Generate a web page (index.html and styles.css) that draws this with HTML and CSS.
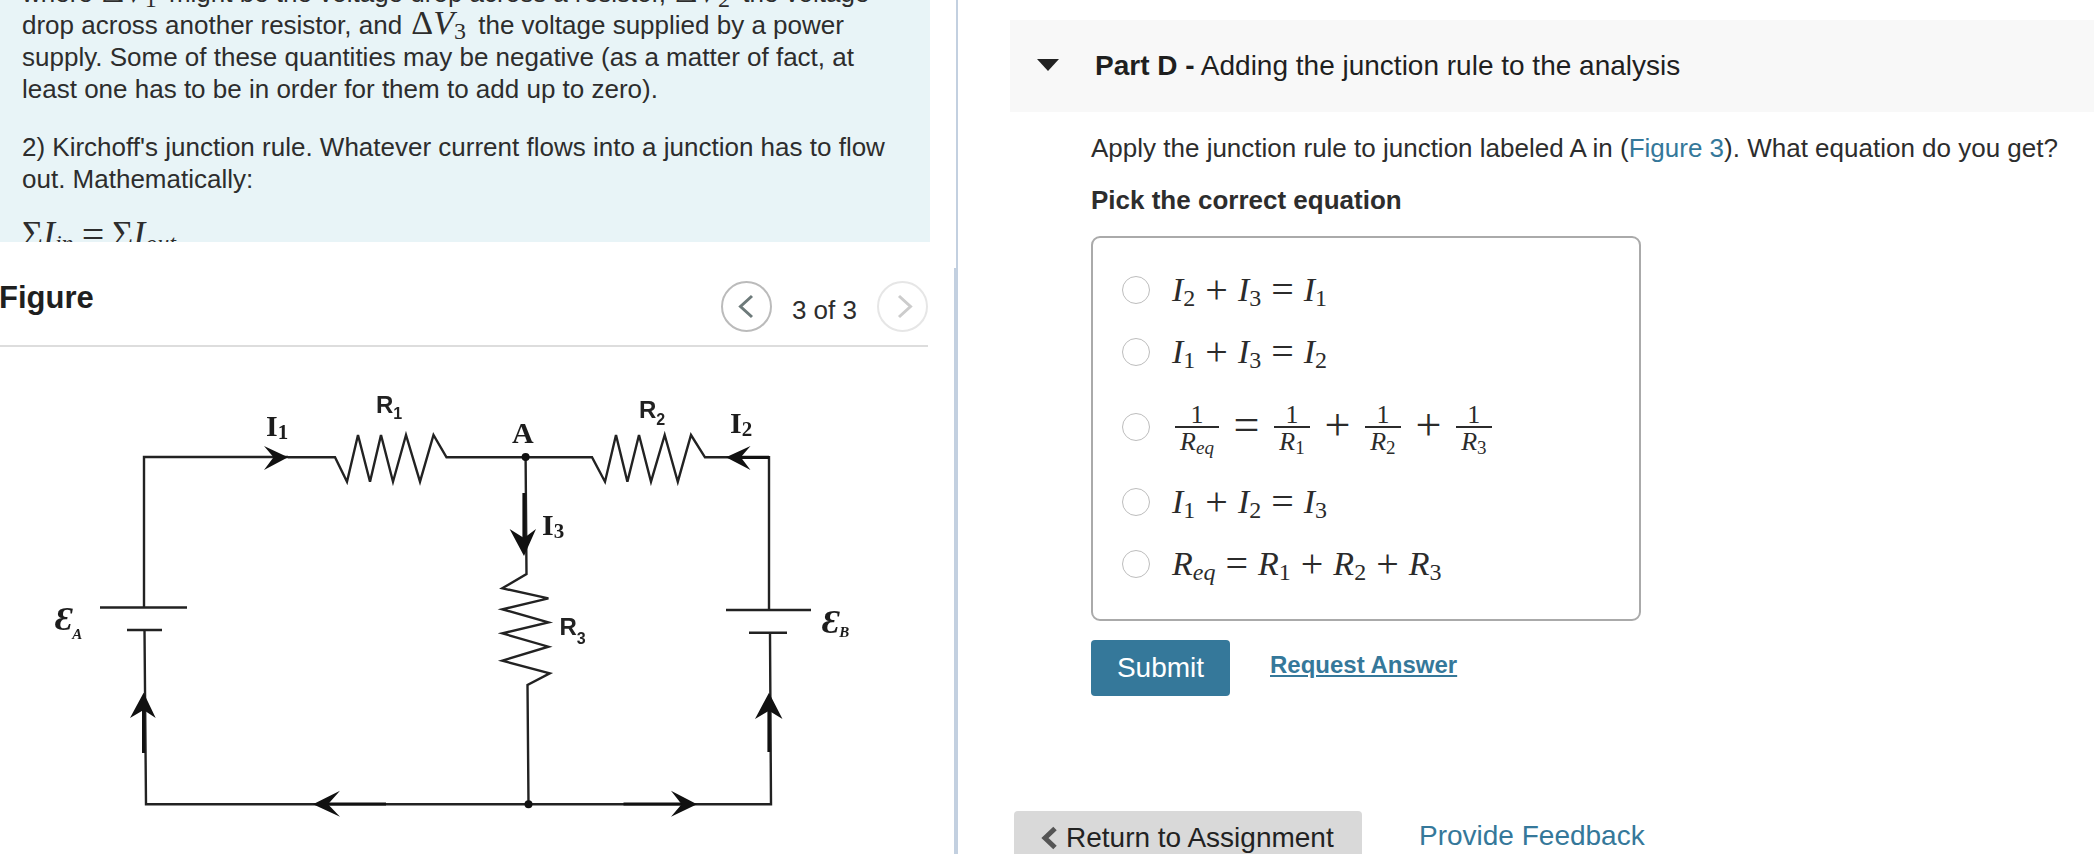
FILE: index.html
```html
<!DOCTYPE html>
<html lang="en">
<head>
<meta charset="utf-8">
<title>Part D - Adding the junction rule to the analysis</title>
<link rel="stylesheet" href="styles.css">
</head>
<body>
<div class="page">
  <section class="left">
    <div class="intro">
      <div class="intro-inner">
        <p class="para">where <span class="m"><span class="up">Δ</span><i>V</i><sub>1</sub></span> might be the voltage drop across a resistor, <span class="m"><span class="up">Δ</span><i>V</i><sub>2</sub></span> the voltage<br>drop across another resistor, and <span class="m"><span class="up">Δ</span><i>V</i><sub>3</sub></span> the voltage supplied by a power<br>supply. Some of these quantities may be negative (as a matter of fact, at<br>least one has to be in order for them to add up to zero).</p>
        <p class="para">2) Kirchoff's junction rule. Whatever current flows into a junction has to flow<br>out. Mathematically:</p>
        <p class="para"><span class="m m-sum">Σ<i>I</i><sub><i>in</i></sub><span class="op op-sum">=</span>Σ<i>I</i><sub><i>out</i></sub></span></p>
      </div>
    </div>
    <header class="fig-head">
      <h2 class="fig-title">Figure</h2>
      <nav class="pager">
        <span class="circle"><svg class="chev" viewBox="0 0 47 47"><path d="M29 13 L17.500 23.500 L29 34"/></svg></span>
        <span class="count">3 of 3</span>
        <span class="circle off"><svg class="chev" viewBox="0 0 47 47"><path d="M20 13 L31.500 23.500 L20 34"/></svg></span>
      </nav>
    </header>
    <svg class="circuit" viewBox="0 348 930 506" role="img" aria-label="Circuit diagram">
      <g class="wire">
        <path d="M288 457 H144 V607.500"/>
        <path d="M100 607.500 H187"/>
        <path d="M127 630 H162"/>
        <path d="M144.500 630 L146 804.300 H771 L770 632.700"/>
        <path d="M749 632.700 H787"/>
        <path d="M726 610 H811"/>
        <path d="M769 610 V457.300 H705 L691 435 L677.800 481.700 L664.700 435 L651 481.700 L639 435 L627.400 481.700 L616 435 L605 481.700 L592 457.300 H446.500 L433.500 435 L420 481.700 L406 435 L393 481.700 L381 435 L370 481.700 L358 435 L347 481.700 L335 457.300 H288"/>
        <path d="M525.600 457 L526.500 574 L502.300 588.300 L548.400 598.300 L502.300 609.300 L548.400 622.300 L502.300 633.300 L548.400 646.700 L502.300 660.700 L549.800 673.300 L527.500 685 L528.500 804"/>
      </g>
      <g class="thick">
        <path d="M524 493 V540"/>
        <path d="M143.600 705 V753"/>
        <path d="M769 705 V752"/>
        <path d="M320 804 H386"/>
        <path d="M623.500 804 H690"/>
        <path d="M735 457.300 H769"/>
      </g>
      <g class="dark">
        <circle cx="525.600" cy="457" r="4"/>
        <circle cx="528.500" cy="804.300" r="4"/>
        <path d="M288 457.300 L264 446 L273.500 457.300 L264 470 Z"/>
        <path d="M726 457.300 L750.500 446 L740.800 457.300 L750.500 470 Z"/>
        <path d="M524 556 L509.600 529 L524 538 L536 529 Z"/>
        <path d="M143.600 692.700 L130 718 L143.600 710 L155.700 718 Z"/>
        <path d="M769 692.700 L755 719 L769 710.700 L782.500 719 Z"/>
        <path d="M313 804.300 L340 790.700 L328 804.300 L340 816.700 Z"/>
        <path d="M697 804.300 L671 790.700 L681.600 804.300 L671 816.700 Z"/>
      </g>
      <g class="lab-serif">
        <text x="266" y="436">I<tspan class="lab-sub" dy="3">1</tspan></text>
        <text x="730" y="433">I<tspan class="lab-sub" dy="3">2</tspan></text>
        <text x="542" y="535">I<tspan class="lab-sub" dy="3">3</tspan></text>
        <text x="512" y="443">A</text>
      </g>
      <g class="lab-sans">
        <text x="376" y="413">R<tspan class="lab-sub2" dy="6">1</tspan></text>
        <text x="639" y="418">R<tspan class="lab-sub2" dy="7">2</tspan></text>
        <text x="559.500" y="635">R<tspan class="lab-sub2" dy="9">3</tspan></text>
      </g>
      <g class="lab-emf">
        <text x="55" y="630">Ɛ<tspan class="lab-sub3" dy="9">A</tspan></text>
        <text x="822" y="633">Ɛ<tspan class="lab-sub3" dy="4">B</tspan></text>
      </g>
    </svg>
  </section>

  <div class="divider"><span class="dv-top"></span><span class="dv-bottom"></span></div>

  <main class="right">
    <div class="part-bar">
      <span class="caret"></span>
      <h1 class="part-title"><b>Part D -</b> Adding the junction rule to the analysis</h1>
    </div>
    <div class="part-body">
      <p class="question">Apply the junction rule to junction labeled A in (<a class="link" href="#">Figure 3</a>). What equation do you get?</p>
      <p class="pick">Pick the correct equation</p>
      <div class="options">
        <label class="opt"><input class="radio" type="radio" name="eq"><span class="eq"><i>I</i><sub>2</sub><span class="op">+</span><i>I</i><sub>3</sub><span class="op">=</span><i>I</i><sub>1</sub></span></label>
        <label class="opt"><input class="radio" type="radio" name="eq"><span class="eq"><i>I</i><sub>1</sub><span class="op">+</span><i>I</i><sub>3</sub><span class="op">=</span><i>I</i><sub>2</sub></span></label>
        <label class="opt opt-tall"><input class="radio" type="radio" name="eq"><span class="eq eq-frac">
          <span class="frac frac-wide"><span class="num">1</span><span class="den"><i>R</i><sub><i>eq</i></sub></span></span>
          <span class="fop">=</span>
          <span class="frac"><span class="num">1</span><span class="den"><i>R</i><sub>1</sub></span></span>
          <span class="fop">+</span>
          <span class="frac"><span class="num">1</span><span class="den"><i>R</i><sub>2</sub></span></span>
          <span class="fop">+</span>
          <span class="frac"><span class="num">1</span><span class="den"><i>R</i><sub>3</sub></span></span>
        </span></label>
        <label class="opt"><input class="radio" type="radio" name="eq"><span class="eq"><i>I</i><sub>1</sub><span class="op">+</span><i>I</i><sub>2</sub><span class="op">=</span><i>I</i><sub>3</sub></span></label>
        <label class="opt"><input class="radio" type="radio" name="eq"><span class="eq"><i>R</i><sub><i>eq</i></sub><span class="op">=</span><i>R</i><sub>1</sub><span class="op">+</span><i>R</i><sub>2</sub><span class="op">+</span><i>R</i><sub>3</sub></span></label>
      </div>
      <div class="actions">
        <button class="submit" type="button">Submit</button>
        <a class="request" href="#">Request Answer</a>
      </div>
    </div>
    <footer class="foot">
      <a class="back" href="#"><svg class="back-ic" viewBox="0 0 18 24"><path d="M15 2.500 L5 12 L15 21.500"/></svg>Return to Assignment</a>
      <a class="feedback" href="#">Provide Feedback</a>
    </footer>
  </main>
</div>
</body>
</html>
```

FILE: styles.css
```css
* { box-sizing: border-box; }
html, body { margin: 0; height: 854px; overflow: hidden; background: #fff; }
body { font-family: "Liberation Sans", Arial, sans-serif; font-size: 26px; color: #2d2d2d; }
.page { display: flex; height: 854px; overflow: hidden; }

/* left column */
.left { width: 930px; flex: none; height: 854px; overflow: hidden; }
.intro { height: 242px; background: #e8f4f7; overflow: hidden; }
.intro-inner { margin-top: -23px; padding-left: 22px; }
.para { margin: 0 0 26px; line-height: 32px; white-space: nowrap; }
.m { font-family: "Liberation Serif", "Times New Roman", serif; font-size: 34px; line-height: 0; margin: 0 5px 0 2px; }
.m .up { font-style: normal; }
.m sub { font-size: 24px; line-height: 0; vertical-align: -5px; }
.m-sum { margin: 0; font-size: 36px; }
.m-sum .op-sum { margin: 0 8px; }

.fig-head { display: flex; justify-content: space-between; align-items: center; width: 928px; height: 105px; padding-top: 39px; padding-bottom: 14px; border-bottom: 2px solid #ddd; }
.fig-title { margin: 0 0 16px -1px; font-size: 31px; line-height: 36px; font-weight: 700; color: #1f1f1f; }
.pager { display: flex; align-items: center; gap: 20px; }
.circle { display: block; width: 51px; height: 51px; border: 2px solid #bbb; border-radius: 50%; }
.circle.off { border-color: #e6e6e6; }
.chev { display: block; width: 47px; height: 47px; fill: none; stroke: #6d7a7a; stroke-width: 3; }
.off .chev { stroke: #ccc; }
.count { font-size: 26px; line-height: 30px; padding-top: 8px; }

.circuit { display: block; width: 930px; height: 506px; margin-top: 1px; filter: blur(0.5px); }
.wire path { fill: none; stroke: #222; stroke-width: 2.4; stroke-linejoin: miter; }
.thick path { fill: none; stroke: #111; stroke-width: 3.2; }
.dark { fill: #111; }
.lab-serif { font-family: "Liberation Serif", serif; font-weight: 700; font-size: 30px; fill: #1c1c1c; }
.lab-sub { font-size: 21px; }
.lab-sans { font-family: "Liberation Sans", sans-serif; font-weight: 700; font-size: 24px; fill: #222; }
.lab-sub2 { font-size: 16px; }
.lab-emf { font-family: "Liberation Serif", serif; font-style: italic; font-weight: 700; font-size: 34px; fill: #1c1c1c; }
.lab-sub3 { font-size: 15px; }

/* divider */
.divider { flex: none; width: 4px; margin-left: 24px; display: flex; flex-direction: column; align-items: flex-end; height: 854px; }
.dv-top { display: block; width: 2px; height: 268px; background: #c3d0e0; }
.dv-bottom { display: block; width: 4px; flex: 1; background: #c3d0e0; }

/* right column */
.right { flex: 1; min-width: 0; margin-left: 52px; padding-top: 20px; }
.part-bar { display: flex; align-items: center; gap: 36px; height: 92px; padding-left: 27px; background: #f8f8f8; }
.caret { width: 0; height: 0; border-left: 11px solid transparent; border-right: 11px solid transparent; border-top: 12px solid #222; margin-top: -3px; }
.part-title { margin: 0; font-size: 28px; line-height: 32px; font-weight: 400; color: #1f1f1f; white-space: nowrap; }
.part-body { padding-left: 81px; }
.question { margin: 20px 0 0; font-size: 26px; line-height: 32px; white-space: nowrap; }
.link { color: #35789a; text-decoration: none; }
.pick { margin: 20px 0 0; font-size: 26px; line-height: 32px; font-weight: 700; }
.options { width: 550px; height: 385px; margin-top: 20px; padding: 21px 0 0 29px; border: 2px solid #aaa; border-radius: 9px; display: flex; flex-direction: column; }
.opt { display: flex; align-items: center; gap: 22px; height: 62px; flex: none; }
.opt-tall { height: 88px; }
.radio { appearance: none; -webkit-appearance: none; flex: none; width: 28px; height: 28px; margin: 0; border: 1.5px solid #bdbdbd; border-radius: 50%; background: #fff; }
.eq { font-family: "Liberation Serif", "Times New Roman", serif; font-size: 34px; line-height: 36px; color: #2b2b2b; white-space: nowrap; }
.eq sub { font-size: 24px; line-height: 0; vertical-align: -5px; }
.op { margin: 0 10px; font-size: 40px; line-height: 0; vertical-align: -2px; }
.eq-frac { display: flex; align-items: center; gap: 14.5px; padding-left: 3px; }
.frac { display: flex; flex-direction: column; align-items: center; width: 36px; font-size: 26px; line-height: 28px; }
.frac-wide { width: 44px; }
.num { display: block; width: 100%; padding-top: 6px; line-height: 22px; text-align: center; border-bottom: 2px solid #2b2b2b; }
.den { display: block; white-space: nowrap; }
.frac sub { font-size: 19px; vertical-align: -4px; }
.fop { font-size: 46px; line-height: 36px; margin-top: -4px; }

.actions { display: flex; align-items: center; gap: 40px; margin-top: 19px; }
.submit { width: 139px; height: 56px; padding: 0; border: 0; border-radius: 4px; background: #35789a; color: #fff; font-family: inherit; font-size: 28px; }
.request { font-size: 24px; font-weight: 700; color: #35789a; text-decoration: underline; margin-top: -6px; }

.foot { display: flex; align-items: flex-start; gap: 57px; margin-top: 115px; padding-left: 4px; }
.back { display: flex; align-items: center; gap: 8px; width: 348px; height: 60px; padding: 0 0 6px 26px; background: #d9d9d9; border-radius: 4px 4px 0 0; color: #222; font-size: 28px; text-decoration: none; }
.back-ic { flex: none; width: 18px; height: 24px; fill: none; stroke: #555; stroke-width: 5; }
.feedback { font-size: 28px; line-height: 30px; margin-top: 10px; color: #35789a; text-decoration: none; }
```
